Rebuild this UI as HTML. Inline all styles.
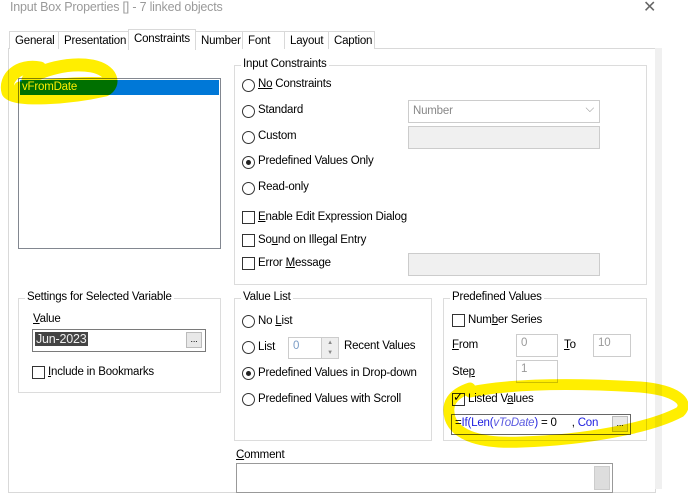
<!DOCTYPE html><html><head><style>
*{margin:0;padding:0;box-sizing:border-box}
body{width:688px;height:489px;background:#fff;position:relative;overflow:hidden;font:11.5px "Liberation Sans",sans-serif;color:#000;letter-spacing:-0.2px}
.a{position:absolute;white-space:nowrap}
.tab{position:absolute;top:31px;height:18px;border:1px solid #d9d9d9;border-bottom:none;background:#fff;padding:3px 0 0 5px;overflow:hidden}
.gb{position:absolute;border:1px solid #dcdcdc}
.gl{position:absolute;top:-8px;left:6px;background:#fff;padding:0 2px}
.r{position:absolute;width:13px;height:13px;border:1px solid #333;border-radius:50%;background:#fff}
.r.on::after{content:"";position:absolute;left:3px;top:3px;width:5px;height:5px;border-radius:50%;background:#222}
.c{position:absolute;width:13px;height:13px;border:1px solid #333;background:#fff}
.f{position:absolute;border:1px solid #ccc;background:#fff;color:#888;padding:2px 4px}
.g{background:#f0f0f0}
u{text-decoration:underline}
</style></head><body>
<div class="a" style="left:10px;top:0px;color:#9a9a9a;font-size:12.5px">Input Box Properties [] - 7 linked objects</div>
<div class="a" style="left:643px;top:-3px;color:#666;font-size:16px">✕</div>
<div class="a" style="left:8px;top:48px;width:648px;height:445px;border:1px solid #d9d9d9"></div>
<div class="a" style="left:655px;top:48px;width:7px;height:441px;background:#f0f0f0"></div>
<div class="tab" style="left:9px;width:50px">General</div>
<div class="tab" style="left:58px;width:71px">Presentation</div>
<div class="tab" style="left:128px;width:68px;top:29px;height:21px;padding-top:3px;background:#fff;z-index:2">Constraints</div>
<div class="tab" style="left:195px;width:48px">Number</div>
<div class="tab" style="left:242px;width:43px">Font</div>
<div class="tab" style="left:284px;width:45px">Layout</div>
<div class="tab" style="left:328px;width:47px">Caption</div>

<div class="a" style="left:18px;top:78px;width:203px;height:171px;border:1px solid #828790"></div>
<div class="a" style="left:20px;top:80px;width:199px;height:15px;background:#0078d7;color:#fff;padding:1px 2px">vFromDate</div>

<div class="gb" style="left:234px;top:65px;width:413px;height:220px"><span class="gl">Input Constraints</span></div>
<div class="r" style="left:242px;top:79px"></div><div class="a" style="left:258px;top:78px"><u>No</u> Constraints</div>
<div class="r" style="left:242px;top:105px"></div><div class="a" style="left:258px;top:104px">Standard</div>
<div class="r" style="left:242px;top:131px"></div><div class="a" style="left:258px;top:130px">Custom</div>
<div class="r on" style="left:242px;top:156px"></div><div class="a" style="left:258px;top:155px">Predefined Values Only</div>
<div class="r" style="left:242px;top:182px"></div><div class="a" style="left:258px;top:181px">Read-only</div>
<div class="c" style="left:242px;top:211px"></div><div class="a" style="left:258px;top:211px"><u>E</u>nable Edit Expression Dialog</div>
<div class="c" style="left:242px;top:234px"></div><div class="a" style="left:258px;top:234px">So<u>u</u>nd on Illegal Entry</div>
<div class="c" style="left:242px;top:257px"></div><div class="a" style="left:258px;top:257px">Error <u>M</u>essage</div>
<div class="f" style="left:408px;top:100px;width:192px;height:23px;padding-top:4px">Number<span style="position:absolute;right:5px;top:2px;color:#999">⌵</span></div>
<div class="f g" style="left:408px;top:126px;width:192px;height:23px"></div>
<div class="f g" style="left:408px;top:253px;width:192px;height:23px"></div>

<div class="gb" style="left:18px;top:298px;width:203px;height:95px"><span class="gl">Settings for Selected Variable</span></div>
<div class="a" style="left:33px;top:313px"><u>V</u>alue</div>
<div class="a" style="left:32px;top:329px;width:174px;height:23px;border:1px solid #7a7a7a"><span style="position:absolute;left:2px;top:2px;background:#444;color:#eee;padding:0 1px;font-size:12.5px">Jun-2023</span><span style="position:absolute;right:3px;top:2px;width:16px;height:16px;border:1px solid #bbb;background:#e8e8e8;font-size:9px;text-align:center;line-height:12px">...</span></div>
<div class="c" style="left:32px;top:366px"></div><div class="a" style="left:48px;top:366px"><u>I</u>nclude in Bookmarks</div>

<div class="gb" style="left:234px;top:298px;width:198px;height:143px"><span class="gl">Value List</span></div>
<div class="r" style="left:242px;top:315px"></div><div class="a" style="left:258px;top:315px">No <u>L</u>ist</div>
<div class="r" style="left:242px;top:341px"></div><div class="a" style="left:258px;top:341px">List</div>
<div class="a" style="left:288px;top:337px;width:51px;height:22px;border:1px solid #ccc;color:#7a9cc6;padding:2px 4px">0<span style="position:absolute;right:0;top:0;width:17px;height:20px;background:#eee;border-left:1px solid #ccc;font-size:6px;color:#888;text-align:center;line-height:10px">▲<br>▼</span></div>
<div class="a" style="left:344px;top:340px">Recent Values</div>
<div class="r on" style="left:242px;top:367px"></div><div class="a" style="left:258px;top:367px">Predefined Values in Drop-down</div>
<div class="r" style="left:242px;top:393px"></div><div class="a" style="left:258px;top:393px">Predefined Values with Scroll</div>

<div class="gb" style="left:443px;top:298px;width:204px;height:143px"><span class="gl">Predefined Values</span></div>
<div class="c" style="left:452px;top:314px"></div><div class="a" style="left:468px;top:314px">Num<u>b</u>er Series</div>
<div class="a" style="left:452px;top:339px"><u>F</u>rom</div>
<div class="f" style="left:516px;top:334px;width:42px;height:23px;color:#999">0</div>
<div class="a" style="left:564px;top:339px"><u>T</u>o</div>
<div class="f" style="left:593px;top:334px;width:38px;height:23px;color:#999">10</div>
<div class="a" style="left:452px;top:366px">Ste<u>p</u></div>
<div class="f" style="left:516px;top:360px;width:42px;height:23px;color:#999">1</div>
<div class="c" style="left:452px;top:393px"></div><div class="a" style="left:453px;top:390px;font-size:12px">✓</div>
<div class="a" style="left:468px;top:393px">Listed V<u>a</u>lues</div>
<div class="a" style="left:451px;top:414px;width:180px;height:21px;border:1px solid #666;padding:2px 3px;overflow:hidden">=<span style="color:#2020e0">If(Len(</span><i style="color:#5a5ae0">vToDate</i><span style="color:#2020e0">)</span> = 0 &nbsp; &nbsp; , <span style="color:#2020e0">Con</span><span style="position:absolute;right:2px;top:1px;width:16px;height:16px;border:1px solid #bbb;background:#e8e8e8;font-size:9px;text-align:center;line-height:12px">...</span></div>

<div class="a" style="left:236px;top:449px"><u>C</u>omment</div>
<div class="a" style="left:236px;top:463px;width:377px;height:30px;border:1px solid #999"></div>
<div class="a" style="left:594px;top:466px;width:16px;height:24px;background:#ddd;border:1px solid #ccc"></div>

<svg class="a" style="left:0;top:0;mix-blend-mode:multiply" width="688" height="489">
<path d="M40,68 C18,64 4,78 8,92 C14,102 70,98 105,90 C116,84 112,70 92,66 C68,62 40,70 28,80 M20,88 C50,86 80,82 108,84" fill="none" stroke="#ffee00" stroke-width="13" stroke-linecap="round" stroke-linejoin="round"/>
<path d="M470,388 C452,394 446,404 450,418 C456,436 482,444 522,442 C585,440 650,428 680,412 C690,402 676,390 640,387 C590,384 520,382 470,392" fill="none" stroke="#ffee00" stroke-width="11" stroke-linecap="round"/>
</svg>
</body></html>
